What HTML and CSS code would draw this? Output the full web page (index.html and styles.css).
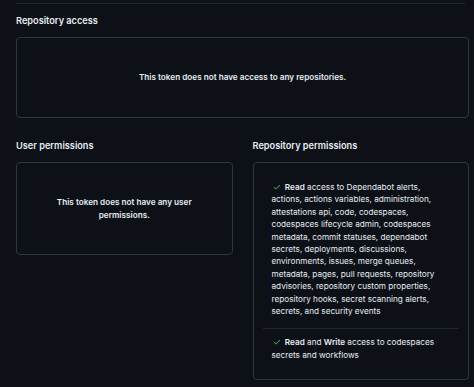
FILE: index.html
```html
<!DOCTYPE html>
<html>
<head>
    <title>Token permissions</title>
    <link rel="stylesheet" href="styles.css">
</head>
<body>
    <div class="page">
        <div class="top-rule"></div>

        <section class="section">
            <h3>Repository access</h3>
            <div class="box blank wide">
                This token does not have access to any repositories.
            </div>
        </section>

        <div class="columns">
            <section class="section">
                <h3>User permissions</h3>
                <div class="box blank tall">
                    This token does not have any user permissions.
                </div>
            </section>

            <section class="section">
                <h3>Repository permissions</h3>
                <div class="box perms">
                    <div class="perm">
                        <svg class="check" viewBox="0 0 16 16" width="8" height="8"><path d="M13.78 4.22a.75.75 0 0 1 0 1.06l-7.25 7.25a.75.75 0 0 1-1.06 0L2.22 9.28a.75.75 0 0 1 1.06-1.06L6 10.94l6.72-6.72a.75.75 0 0 1 1.06 0Z"></path></svg>
                        <b>Read</b> access to Dependabot alerts, actions, actions variables, administration, attestations api, code, codespaces, codespaces lifecycle admin, codespaces metadata, commit statuses, dependabot secrets, deployments, discussions, environments, issues, merge queues, metadata, pages, pull requests, repository advisories, repository custom properties, repository hooks, secret scanning alerts, secrets, and security events
                    </div>
                    <div class="perm">
                        <svg class="check" viewBox="0 0 16 16" width="8" height="8"><path d="M13.78 4.22a.75.75 0 0 1 0 1.06l-7.25 7.25a.75.75 0 0 1-1.06 0L2.22 9.28a.75.75 0 0 1 1.06-1.06L6 10.94l6.72-6.72a.75.75 0 0 1 1.06 0Z"></path></svg>
                        <b>Read</b> and <b>Write</b> access to codespaces secrets and workflows
                    </div>
                </div>
            </section>
        </div>
    </div>
</body>
</html>
```

FILE: styles.css
```css
:root {
    --bg: #0d1117;
    --border: #30363d;
    --text: #e6edf3;
    --green: #3fb950;
    --radius: 4px;
}

body {
    margin: 0;
    background: var(--bg);
    color: var(--text);
    font-family: Inter, 'Noto Sans', 'Liberation Sans', sans-serif;
    font-size: 8.2px;
    line-height: 12.4px;
}

.page {
    padding: 3px 5px 0 16px;
}

.top-rule {
    height: 1px;
    background: #21262d;
    margin-right: 4px;
}

h3 {
    font-size: 9.2px;
    font-weight: 600;
    margin: 11px 0 10px;
    line-height: 12px;
}

.box {
    border: 1px solid var(--border);
    border-radius: var(--radius);
}

.blank {
    display: flex;
    align-items: center;
    justify-content: center;
    text-align: center;
    font-weight: 600;
    padding: 0 38px;
}

.wide {
    height: 79px;
}

.tall {
    height: 91px;
}

.columns {
    display: grid;
    grid-template-columns: 1fr 1fr;
    gap: 20px;
    margin-top: 21px;
}

.columns h3 {
    margin: 1px 0 10px;
}

.perms {
    padding: 8px 9px 8px;
}

.perm {
    padding: 10px 9px 11px;
}

.perm + .perm {
    border-top: 1px solid #21262d;
    padding-top: 7px;
    padding-bottom: 10px;
}

.perm b {
    font-weight: 600;
}

.check {
    fill: var(--green);
    vertical-align: -1px;
    margin: 0 2px 0 1px;
}
```
